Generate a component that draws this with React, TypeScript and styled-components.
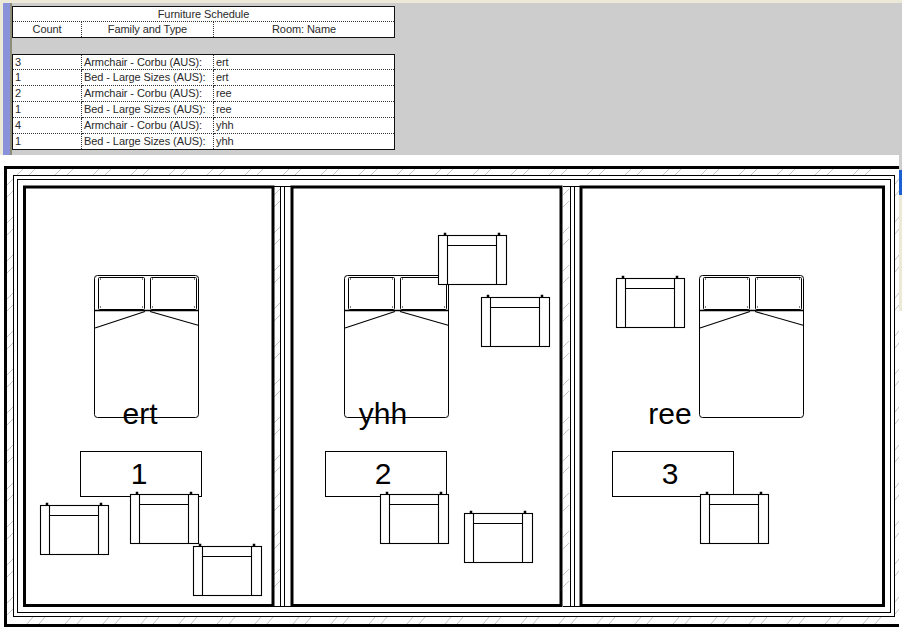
import React from "react";
import styled, { createGlobalStyle } from "styled-components";

const GlobalStyle = createGlobalStyle`
    html, body {
        margin: 0;
        padding: 0;
        background: #fff;
        overflow: hidden;
    }
`;

const scheduleRows = [
    ["3", "Armchair - Corbu (AUS):", "ert"],
    ["1", "Bed - Large Sizes (AUS):", "ert"],
    ["2", "Armchair - Corbu (AUS):", "ree"],
    ["1", "Bed - Large Sizes (AUS):", "ree"],
    ["4", "Armchair - Corbu (AUS):", "yhh"],
    ["1", "Bed - Large Sizes (AUS):", "yhh"],
];

const chairs = [
    [40, 505], [130, 494], [193, 546],
    [438, 235], [481, 297], [380, 494], [464, 513],
    [616, 278], [700, 494],
];

const rooms = [
    { x: 24.5, width: 248.5, name: "ert", nameX: 140, bedX: 95, tagX: 80.5, num: "1", numX: 139 },
    { x: 292, width: 269, name: "yhh", nameX: 383, bedX: 345, tagX: 325.5, num: "2", numX: 383 },
    { x: 581, width: 302.5, name: "ree", nameX: 670, bedX: 700, tagX: 612.5, num: "3", numX: 670 },
];

const range = (start: number, end: number, step: number) => {
    const out: number[] = [];
    for (let v = start; v < end; v += step) out.push(v);
    return out;
};

// wall hatching: slashes come in pairs, roughly 38px apart
const hatchPath = [
    ...range(17, 890, 38).flatMap((x) => [`M${x} 175L${x + 6} 169`, `M${x + 12} 175L${x + 18} 169`]),
    ...range(27, 890, 38).flatMap((x) => [`M${x} 624L${x + 6} 617`, `M${x + 12} 624L${x + 18} 617`]),
    ...range(179, 610, 38).flatMap((y) => [`M7 ${y + 6}L13 ${y}`, `M7 ${y + 18}L13 ${y + 12}`]),
    ...range(189, 600, 38).flatMap((y) => [`M274 ${y + 6}L280 ${y}`, `M274 ${y + 18}L280 ${y + 12}`]),
    ...range(189, 600, 38).flatMap((y) => [`M563 ${y + 6}L569 ${y}`, `M563 ${y + 18}L569 ${y + 12}`]),
    ...range(179, 610, 38).flatMap((y) => [`M895 ${y + 5}L899 ${y}`, `M895 ${y + 17}L899 ${y + 12}`]),
].join(" ");

const Page = styled.div`
    width: 902px;
    height: 628px;
    display: flex;
    flex-direction: column;
    font-family: "Liberation Sans", Arial, sans-serif;
`;

const SchedulePane = styled.section`
    height: 155px;
    flex: none;
    display: flex;
    background: #ece9d8;
`;

const SideEdge = styled.div`
    width: 7px;
    margin-left: 3px;
    margin-top: 3px;
    background: #8a92da;
    border-right: 2px solid #8d8d78;
`;

const ScheduleBody = styled.div`
    flex: 1;
    margin-top: 3px;
    padding: 3px 0 0 0;
    display: flex;
    flex-direction: column;
    gap: 16px;
    background: #cdcdcd;
`;

const Table = styled.table`
    width: 383px;
    table-layout: fixed;
    border-collapse: separate;
    border-spacing: 0;
    border: 1px solid #111;
    background: #fff;
    color: #2a2a2a;
    font-size: 11px;
    letter-spacing: -0.08px;
`;

const Cell = styled.td<{ $center?: boolean }>`
    height: 15px;
    line-height: 15px;
    padding: 0 0 0 ${(p) => (p.$center ? 0 : 2)}px;
    text-align: ${(p) => (p.$center ? "center" : "left")};
    white-space: nowrap;
    overflow: hidden;
    border-right: 1px dotted #333;
    border-bottom: 1px dotted #333;

    &:last-child {
        border-right: 0;
    }

    tr:first-child > & {
        height: 14px;
        line-height: 14px;
    }

    tr:last-child > & {
        border-bottom: 0;
    }
`;

const PlanRow = styled.div`
    flex: 1;
    display: flex;
    min-height: 0;
`;

const Plan = styled.svg`
    display: block;
    width: 899px;
    height: 473px;
    flex: none;
`;

const WindowEdge = styled.div`
    flex: 1;
    display: flex;
    flex-direction: column;
`;

const EdgePiece = styled.div<{ $h: number; $color: string }>`
    height: ${(p) => p.$h}px;
    background: ${(p) => p.$color};
`;

const RoomLabel = styled.text`
    font-family: "Liberation Sans", Arial, sans-serif;
    font-size: 30px;
    fill: #000;
    text-anchor: middle;
`;

const Bed: React.FC<{ x: number }> = ({ x }) => (
    <g transform={`translate(${x} 276)`} fill="none" stroke="#000" strokeWidth={1}>
        <rect x={-0.5} y={-0.5} width={104} height={142} rx={3} fill="#fff" />
        <rect x={3.5} y={1.5} width={46} height={32} rx={1} />
        <rect x={55.5} y={1.5} width={46} height={32} rx={1} />
        <path d="M0 34.5H104" strokeWidth={1.6} />
        <path d="M0 52L50 35.5M55 35.5L104 49.5" strokeWidth={1.1} />
        <path d="M5 3h1M47 3h1M57 3h1M99 3h1M5 31h1M47 31h1M57 31h1M99 31h1" />
    </g>
);

const Chair: React.FC<{ x: number; y: number }> = ({ x, y }) => (
    <g transform={`translate(${x} ${y})`} stroke="#000" strokeWidth={1.1}>
        <rect x={0.5} y={0.5} width={68} height={49} fill="#fff" />
        <path d="M9.5 0.5V49.5M58.5 0.5V49.5M9.5 10.5H58.5" fill="none" />
        <rect x={6} y={-2} width={2} height={2} fill="#000" strokeWidth={0.5} />
        <rect x={60} y={-2} width={2} height={2} fill="#000" strokeWidth={0.5} />
    </g>
);

const Schedule: React.FC = () => (
    <ScheduleBody>
        <Table>
            <colgroup>
                <col style={{ width: 69 }} />
                <col style={{ width: 132 }} />
                <col />
            </colgroup>
            <tbody>
                <tr>
                    <Cell $center colSpan={3}>Furniture Schedule</Cell>
                </tr>
                <tr>
                    <Cell $center>Count</Cell>
                    <Cell $center>Family and Type</Cell>
                    <Cell $center>Room: Name</Cell>
                </tr>
            </tbody>
        </Table>
        <Table>
            <colgroup>
                <col style={{ width: 69 }} />
                <col style={{ width: 132 }} />
                <col />
            </colgroup>
            <tbody>
                {scheduleRows.map((row, i) => (
                    <tr key={i}>
                        {row.map((value, j) => (
                            <Cell key={j}>{value}</Cell>
                        ))}
                    </tr>
                ))}
            </tbody>
        </Table>
    </ScheduleBody>
);

const FloorPlan: React.FC = () => (
    <Plan viewBox="0 155 899 473">
        <path d={hatchPath} fill="none" stroke="#a8a8a8" strokeWidth={0.7} />
        <g fill="none" stroke="#000">
            <path d="M899 167.5H5.5V625.5H899" strokeWidth={3} />
            <rect x={13.5} y={175.5} width={881} height={441} />
            <rect x={17.5} y={179.5} width={873} height={433} />
            <path d="M280.5 186.5V606.5M284.5 186.5V606.5M274 186.5H291M274 606.5H291" />
            <path d="M570.5 186.5V606.5M574.5 186.5V606.5M563 186.5H580M563 606.5H580" />
            {rooms.map((room) => (
                <rect key={room.name} x={room.x} y={187} width={room.width} height={418.5} strokeWidth={3} />
            ))}
        </g>
        {rooms.map((room) => (
            <Bed key={room.name} x={room.bedX} />
        ))}
        {rooms.map((room) => (
            <rect key={room.num} x={room.tagX} y={451.5} width={121} height={45} fill="#fff" stroke="#000" />
        ))}
        {chairs.map(([x, y]) => (
            <Chair key={`${x}-${y}`} x={x} y={y} />
        ))}
        {rooms.map((room) => (
            <g key={room.name}>
                <RoomLabel x={room.nameX} y={424}>{room.name}</RoomLabel>
                <RoomLabel x={room.numX} y={484}>{room.num}</RoomLabel>
            </g>
        ))}
    </Plan>
);

export default function App() {
    return (
        <Page>
            <GlobalStyle />
            <SchedulePane>
                <SideEdge />
                <Schedule />
            </SchedulePane>
            <PlanRow>
                <FloorPlan />
                <WindowEdge>
                    <EdgePiece $h={15} $color="#cdcdcd" />
                    <EdgePiece $h={25} $color="#1c5fd0" />
                    <EdgePiece $h={116} $color="#ece9d8" />
                </WindowEdge>
            </PlanRow>
        </Page>
    );
}
